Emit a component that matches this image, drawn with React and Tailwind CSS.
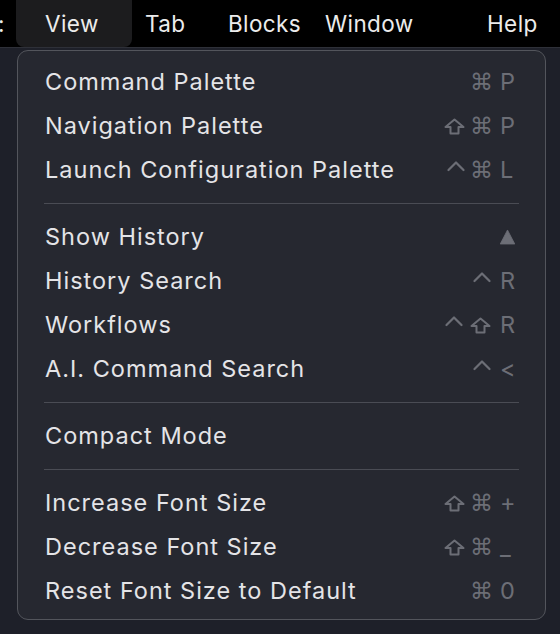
import React from 'react';

const Cmd = () => (
  <span className="font-['DejaVu_Sans'] text-[23px] leading-none w-[19px] flex justify-center">⌘</span>
);

const Shift = () => (
  <svg width="21" height="17" viewBox="0 0 21 17" fill="none" stroke="currentColor" strokeWidth="2" strokeLinejoin="round">
    <path d="M10.5 1.5 L19.5 9 H14.5 V15.5 H6.5 V9 H1.5 Z" />
  </svg>
);

const Ctrl = () => (
  <svg width="18" height="20" viewBox="0 0 18 20" fill="none" stroke="currentColor" strokeWidth="2.2" strokeLinecap="round" strokeLinejoin="round">
    <path d="M1.5 10 L9 2.5 L16.5 10" />
  </svg>
);

const Tri = () => (
  <svg width="16" height="16" viewBox="0 0 16 16" fill="currentColor">
    <path d="M8 0.5 L15.8 15.5 H0.2 Z" strokeLinejoin="round" stroke="currentColor" strokeWidth="0.8" />
  </svg>
);

const icon = { cmd: <Cmd />, shift: <Shift />, ctrl: <Ctrl /> };

const groups = [
  [
    { label: 'Command Palette', mods: ['cmd'], key: 'P' },
    { label: 'Navigation Palette', mods: ['shift', 'cmd'], key: 'P' },
    { label: 'Launch Configuration Palette', mods: ['ctrl', 'cmd'], key: 'L' },
  ],
  [
    { label: 'Show History', mods: [], key: 'tri' },
    { label: 'History Search', mods: ['ctrl'], key: 'R' },
    { label: 'Workflows', mods: ['ctrl', 'shift'], key: 'R' },
    { label: 'A.I. Command Search', mods: ['ctrl'], key: '<' },
  ],
  [{ label: 'Compact Mode', mods: [], key: '' }],
  [
    { label: 'Increase Font Size', mods: ['shift', 'cmd'], key: '+' },
    { label: 'Decrease Font Size', mods: ['shift', 'cmd'], key: '_' },
    { label: 'Reset Font Size to Default', mods: ['cmd'], key: '0' },
  ],
];

const Row = ({ item }) => (
  <div className="flex items-center justify-between h-[44px] pl-[27px] pr-[30px]">
    <span className="text-[23.5px] tracking-[1px] text-[#e4e4e7]">{item.label}</span>
    <span className="flex items-center text-[23.5px] text-[#6c6e76]">
      <span className="flex items-center gap-[7px]">
        {item.mods.map((m, i) => (
          <span key={i} className="flex items-center">{icon[m]}</span>
        ))}
      </span>
      {item.key && (
        <span className="w-[15px] ml-[9px] flex items-center">
          {item.key === 'tri' ? <Tri /> : item.key}
        </span>
      )}
    </span>
  </div>
);

export default function App() {
  return (
    <div className="w-[560px] h-[634px] bg-[#1e2029] overflow-hidden font-['Inter',sans-serif]">
      <div className="h-[48px] bg-black flex items-center text-[22.5px] tracking-[0.4px] text-[#ececec] border-b border-[#2e3038]">
        <span className="w-[16px] -ml-[2px]">:</span>
        <div className="h-full w-[116px] ml-[2px] bg-[#1c1c1e] rounded-b-[8px] flex items-center pl-[29px]">View</div>
        <span className="w-[96px] pl-[13px]">Tab</span>
        <span className="w-[97px]">Blocks</span>
        <span className="w-[162px]">Window</span>
        <span>Help</span>
      </div>
      <div className="ml-[17px] mt-[2px] w-[529px] h-[570px] bg-[#262830] border border-[#53555c] rounded-[11px] pt-[9px]">
        {groups.map((g, gi) => (
          <div key={gi}>
            {gi > 0 && (
              <div className="py-[11px] mx-[26px]">
                <div className="h-[1px] bg-[#4a4c54]" />
              </div>
            )}
            {g.map((item) => (
              <Row key={item.label} item={item} />
            ))}
          </div>
        ))}
      </div>
    </div>
  );
}
